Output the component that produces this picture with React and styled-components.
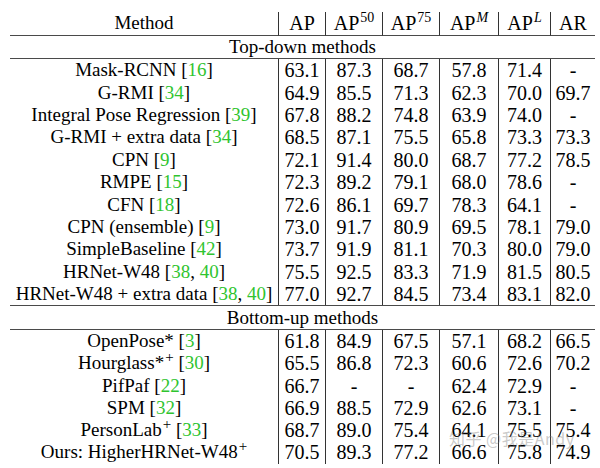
import React from "react";
import styled, { createGlobalStyle } from "styled-components";

const topDown = [
  { name: "Mask-RCNN", refs: ["16"], v: ["63.1", "87.3", "68.7", "57.8", "71.4", "-"] },
  { name: "G-RMI", refs: ["34"], v: ["64.9", "85.5", "71.3", "62.3", "70.0", "69.7"] },
  { name: "Integral Pose Regression", refs: ["39"], v: ["67.8", "88.2", "74.8", "63.9", "74.0", "-"] },
  { name: "G-RMI + extra data", refs: ["34"], v: ["68.5", "87.1", "75.5", "65.8", "73.3", "73.3"] },
  { name: "CPN", refs: ["9"], v: ["72.1", "91.4", "80.0", "68.7", "77.2", "78.5"] },
  { name: "RMPE", refs: ["15"], v: ["72.3", "89.2", "79.1", "68.0", "78.6", "-"] },
  { name: "CFN", refs: ["18"], v: ["72.6", "86.1", "69.7", "78.3", "64.1", "-"] },
  { name: "CPN (ensemble)", refs: ["9"], v: ["73.0", "91.7", "80.9", "69.5", "78.1", "79.0"] },
  { name: "SimpleBaseline", refs: ["42"], v: ["73.7", "91.9", "81.1", "70.3", "80.0", "79.0"] },
  { name: "HRNet-W48", refs: ["38", "40"], v: ["75.5", "92.5", "83.3", "71.9", "81.5", "80.5"] },
  { name: "HRNet-W48 + extra data", refs: ["38", "40"], v: ["77.0", "92.7", "84.5", "73.4", "83.1", "82.0"] },
];

const bottomUp = [
  { name: "OpenPose*", refs: ["3"], v: ["61.8", "84.9", "67.5", "57.1", "68.2", "66.5"] },
  { name: "Hourglass*", sup: "+", refs: ["30"], v: ["65.5", "86.8", "72.3", "60.6", "72.6", "70.2"] },
  { name: "PifPaf", refs: ["22"], v: ["66.7", "-", "-", "62.4", "72.9", "-"] },
  { name: "SPM", refs: ["32"], v: ["66.9", "88.5", "72.9", "62.6", "73.1", "-"] },
  { name: "PersonLab", sup: "+", refs: ["33"], v: ["68.7", "89.0", "75.4", "64.1", "75.5", "75.4"] },
  { name: "Ours: HigherHRNet-W48", sup: "+", refs: [], v: ["70.5", "89.3", "77.2", "66.6", "75.8", "74.9"] },
];

const colWidths = [268, 47, 57, 57, 59, 52, 45];

const Global = createGlobalStyle`
  html, body {
    margin: 0;
    padding: 0;
    background: #ffffff;
  }
`;

const Page = styled.div`
  position: relative;
  width: 600px;
  height: 468px;
  overflow: hidden;
  padding: 12px 0 0 10px;
  box-sizing: border-box;
  font-family: "Liberation Serif", "Times New Roman", serif;
  color: #000;
`;

const Table = styled.table`
  border-collapse: separate;
  border-spacing: 0;
  table-layout: fixed;
  width: 585px;
  font-family: "Liberation Serif", "Times New Roman", serif;
  color: #000;
`;

const HeadCell = styled.th`
  font-weight: normal;
  height: 22.5px;
  padding: 0;
  line-height: 22px;
  text-align: center;
  white-space: nowrap;
  border-bottom: 1.5px solid #4a4a4a;
  border-left: ${(p) => (p.$first ? "none" : "1px solid #333")};
  font-size: ${(p) => (p.$first ? "19px" : "20px")};
`;

const Sup = styled.sup`
  font-size: 14px;
  vertical-align: 8px;
  line-height: 0;
  margin-left: 1px;
  font-style: ${(p) => (p.$italic ? "italic" : "normal")};
`;

const SectionCell = styled.td`
  font-size: 19px;
  height: 22.5px;
  padding: 0;
  line-height: 22px;
  text-align: center;
  border-bottom: 1.5px solid #4a4a4a;
  border-top: ${(p) => (p.$top ? "1.5px solid #4a4a4a" : "none")};
`;

const Cell = styled.td`
  height: ${(p) => p.$h}px;
  padding: 0;
  line-height: 20px;
  text-align: center;
  white-space: nowrap;
  font-size: ${(p) => (p.$method ? "19px" : "20px")};
  border-left: ${(p) => (p.$method ? "none" : "1px solid #333")};
`;

const Ref = styled.span`
  color: #2fc42f;
`;

const Mark = styled.sup`
  font-size: 15px;
  vertical-align: 7px;
  line-height: 0;
  margin-left: 1px;
`;

const Watermark = styled.div`
  position: absolute;
  left: 449px;
  top: 426px;
  font-family: "Noto Sans CJK SC", "Liberation Sans", sans-serif;
  font-size: 16px;
  color: rgba(120, 120, 120, 0.4);
  letter-spacing: 0.5px;
  pointer-events: none;
`;

const Method = ({ row }) => (
  <>
    {row.name}
    {row.sup && <Mark>{row.sup}</Mark>}
    {row.refs.length > 0 && (
      <>
        {" ["}
        {row.refs.map((r, i) => (
          <React.Fragment key={r}>
            {i > 0 && ", "}
            <Ref>{r}</Ref>
          </React.Fragment>
        ))}
        ]
      </>
    )}
  </>
);

const Rows = ({ rows, h }) =>
  rows.map((row) => (
    <tr key={row.name}>
      <Cell $method $h={h}>
        <Method row={row} />
      </Cell>
      {row.v.map((x, i) => (
        <Cell key={i} $h={h}>
          {x}
        </Cell>
      ))}
    </tr>
  ));

export default function App() {
  return (
    <Page>
      <Global />
      <Table>
        <colgroup>
          {colWidths.map((w, i) => (
            <col key={i} style={{ width: w }} />
          ))}
        </colgroup>
        <thead>
          <tr>
            <HeadCell $first>Method</HeadCell>
            <HeadCell>AP</HeadCell>
            <HeadCell>
              AP<Sup>50</Sup>
            </HeadCell>
            <HeadCell>
              AP<Sup>75</Sup>
            </HeadCell>
            <HeadCell>
              AP<Sup $italic>M</Sup>
            </HeadCell>
            <HeadCell>
              AP<Sup $italic>L</Sup>
            </HeadCell>
            <HeadCell>AR</HeadCell>
          </tr>
        </thead>
        <tbody>
          <tr>
            <SectionCell colSpan={7}>Top-down methods</SectionCell>
          </tr>
          <Rows rows={topDown} h={22.4} />
          <tr>
            <SectionCell colSpan={7} $top>
              Bottom-up methods
            </SectionCell>
          </tr>
          <Rows rows={bottomUp} h={22.3} />
        </tbody>
      </Table>
      <Watermark>知乎 @我是Andy</Watermark>
    </Page>
  );
}
